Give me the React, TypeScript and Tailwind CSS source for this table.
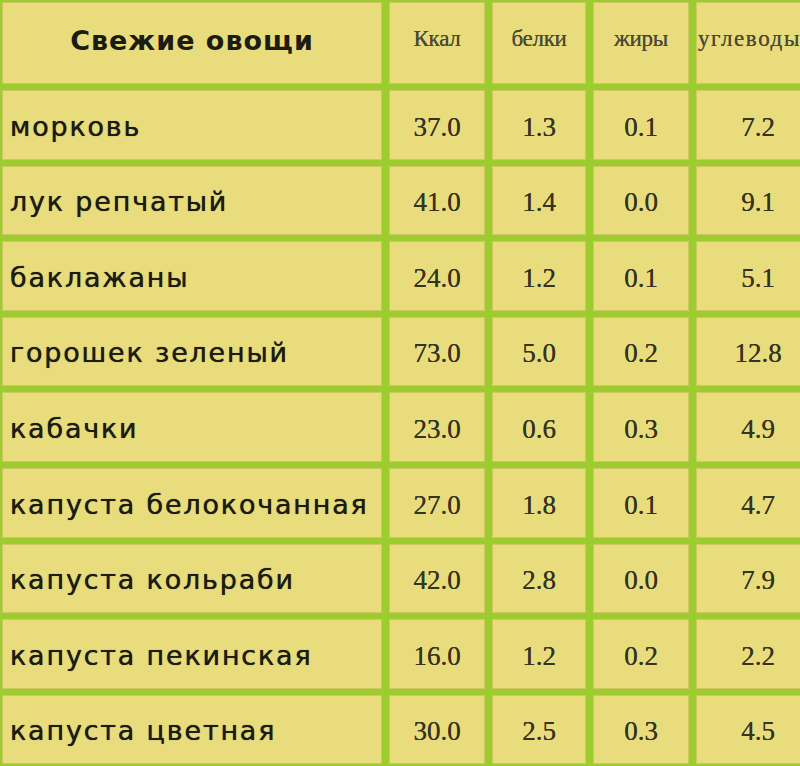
const rows: [string, string, string, string, string][] = [
  ['морковь', '37.0', '1.3', '0.1', '7.2'],
  ['лук репчатый', '41.0', '1.4', '0.0', '9.1'],
  ['баклажаны', '24.0', '1.2', '0.1', '5.1'],
  ['горошек зеленый', '73.0', '5.0', '0.2', '12.8'],
  ['кабачки', '23.0', '0.6', '0.3', '4.9'],
  ['капуста белокочанная', '27.0', '1.8', '0.1', '4.7'],
  ['капуста кольраби', '42.0', '2.8', '0.0', '7.9'],
  ['капуста пекинская', '16.0', '1.2', '0.2', '2.2'],
  ['капуста цветная', '30.0', '2.5', '0.3', '4.5'],
];

const headers = ['Ккал', 'белки', 'жиры'];

const cell = 'bg-[#e9dc7c] shadow-[inset_0_0_0_1px_#cfc766] flex items-center';

export default function App() {
  return (
    <div className="w-[800px] h-[766px] overflow-hidden bg-[#9dcc2f]">
      <div className="grid grid-cols-[380px_96px_94px_96px_124px] grid-rows-[82px_repeat(9,69.6px)] gap-x-[7px] gap-y-[6px] pl-[2px] pt-[2px] w-[830px]">
        <div className={`${cell} justify-center`}>
          <span className="font-['DejaVu_Sans',sans-serif] font-bold text-[27px] text-[#1c1c12] tracking-[1px] -mt-1">
            Свежие овощи
          </span>
        </div>
        {headers.map((h) => (
          <div key={h} className={`${cell} justify-center`}>
            <span className="font-['Liberation_Serif',serif] text-[23px] text-[#4a4a36] tracking-[-0.3px] -mt-2 whitespace-nowrap [text-shadow:0_0_0.5px_#4a4a36]">
              {h}
            </span>
          </div>
        ))}
        <div className={`${cell} pl-[2px]`}>
          <span className="font-['Liberation_Serif',serif] text-[23px] text-[#4a4a36] tracking-[1.6px] -mt-2 whitespace-nowrap [text-shadow:0_0_0.5px_#4a4a36]">
            углеводы
          </span>
        </div>
        {rows.map((r) => (
          <>
            <div key={r[0]} className={`${cell} pl-[8px]`}>
              <span className="font-['DejaVu_Sans',sans-serif] text-[27px] text-[#1c1c12] tracking-[1.8px] mt-1 whitespace-nowrap [text-shadow:0_0_0.7px_#1c1c12]">
                {r[0]}
              </span>
            </div>
            {r.slice(1).map((v, i) => (
              <div key={r[0] + i} className={`${cell} justify-center`}>
                <span className="font-['Liberation_Serif',serif] text-[27px] text-[#34341f] mt-1 [text-shadow:0_0_0.6px_#34341f]">
                  {v}
                </span>
              </div>
            ))}
          </>
        ))}
      </div>
    </div>
  );
}
